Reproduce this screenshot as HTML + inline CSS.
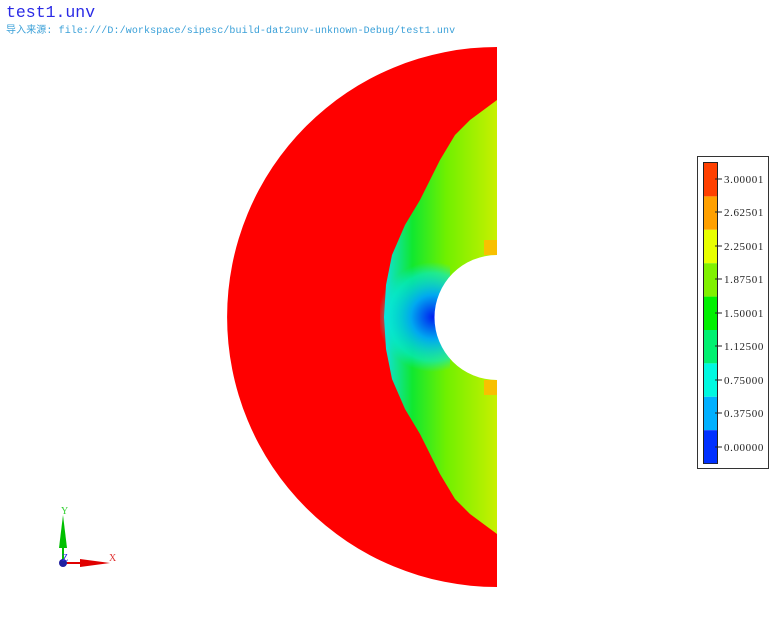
<!DOCTYPE html>
<html><head><meta charset="utf-8"><style>
html,body{margin:0;padding:0;background:#fff;width:778px;height:627px;overflow:hidden;position:relative}
.t{position:absolute;left:6px;top:3px;font-family:"Liberation Mono",monospace;font-size:16.5px;color:#2a2ae6}
.s{position:absolute;left:6px;top:21px;font-family:"Liberation Mono","Noto Sans CJK SC",monospace;font-size:10px;letter-spacing:0.1px;color:#3aa0d8}
</style></head><body>
<div class="t">test1.unv</div>
<div class="s">导入来源: file:///D:/workspace/sipesc/build-dat2unv-unknown-Debug/test1.unv</div>
<svg width="778" height="627" style="position:absolute;left:0;top:0" xmlns="http://www.w3.org/2000/svg">
<defs>
<linearGradient id="g" x1="384" y1="0" x2="497" y2="0" gradientUnits="userSpaceOnUse">
<stop offset="0" stop-color="#10e0e0"/><stop offset="0.25" stop-color="#10e830"/><stop offset="0.55" stop-color="#70f000"/><stop offset="1" stop-color="#c8f000"/>
</linearGradient>
<radialGradient id="b" cx="433" cy="317" r="55" gradientUnits="userSpaceOnUse">
<stop offset="0" stop-color="#0020f0"/><stop offset="0.4" stop-color="#00a8f0"/><stop offset="0.8" stop-color="#00e8e0" stop-opacity="0.6"/><stop offset="1" stop-color="#00e8e0" stop-opacity="0"/>
</radialGradient>
</defs>
<path d="M497 47 A270 270 0 0 0 497 587 Z" fill="#ff0000"/>
<polygon points="497,100 470,120 455,135 440,160 420,200 405,225 392,255 386,285 384,317 386,349 392,379 405,409 420,434 440,474 455,499 470,514 497,534" fill="url(#g)"/>
<rect x="380" y="250" width="70" height="134" fill="url(#b)"/>
<rect x="484" y="240" width="13" height="15" fill="#f8c000"/>
<rect x="484" y="380" width="13" height="15" fill="#f8c000"/>
<path d="M497 255 A62 62 0 0 0 497 380 Z" fill="#fff"/>
<rect x="697.5" y="156.5" width="71" height="312" fill="#fff" stroke="#333"/>
<rect x="703.5" y="162.5" width="14" height="301" fill="none" stroke="#222"/>
<rect x="704" y="163" width="13" height="33.4" fill="#ff4000"/>
<rect x="704" y="196.4" width="13" height="33.4" fill="#ffa000"/>
<rect x="704" y="229.8" width="13" height="33.4" fill="#e8ff00"/>
<rect x="704" y="263.2" width="13" height="33.4" fill="#80f000"/>
<rect x="704" y="296.6" width="13" height="33.4" fill="#00f000"/>
<rect x="704" y="330" width="13" height="33.4" fill="#00f070"/>
<rect x="704" y="363.4" width="13" height="33.4" fill="#00f8e0"/>
<rect x="704" y="396.8" width="13" height="33.4" fill="#00b0ff"/>
<rect x="704" y="430.2" width="13" height="33" fill="#0030ff"/>
<g font-family="Liberation Serif,serif" font-size="11" fill="#222" letter-spacing="0.6">
<text x="724" y="183">3.00001</text><text x="724" y="216">2.62501</text><text x="724" y="250">2.25001</text><text x="724" y="283">1.87501</text><text x="724" y="317">1.50001</text><text x="724" y="350">1.12500</text><text x="724" y="384">0.75000</text><text x="724" y="417">0.37500</text><text x="724" y="451">0.00000</text>
</g>
<g stroke="#222"><line x1="715" y1="179" x2="722" y2="179"/><line x1="715" y1="212" x2="722" y2="212"/><line x1="715" y1="246" x2="722" y2="246"/><line x1="715" y1="279" x2="722" y2="279"/><line x1="715" y1="313" x2="722" y2="313"/><line x1="715" y1="346" x2="722" y2="346"/><line x1="715" y1="380" x2="722" y2="380"/><line x1="715" y1="413" x2="722" y2="413"/><line x1="715" y1="447" x2="722" y2="447"/></g>
<line x1="63" y1="563" x2="63" y2="540" stroke="#00c000" stroke-width="2"/>
<polygon points="63,515 59,548 67,548" fill="#00c000"/>
<line x1="63" y1="563" x2="82" y2="563" stroke="#e00000" stroke-width="2"/>
<polygon points="110,563 80,559 80,567" fill="#e00000"/>
<circle cx="63" cy="563" r="4" fill="#2020a0"/>
<g font-family="Liberation Serif,serif" font-size="10"><text x="61" y="514" fill="#30d030">Y</text><text x="109" y="561" fill="#e03030">X</text><text x="62" y="561" fill="#3030e0">Z</text></g>
</svg>
</body></html>
